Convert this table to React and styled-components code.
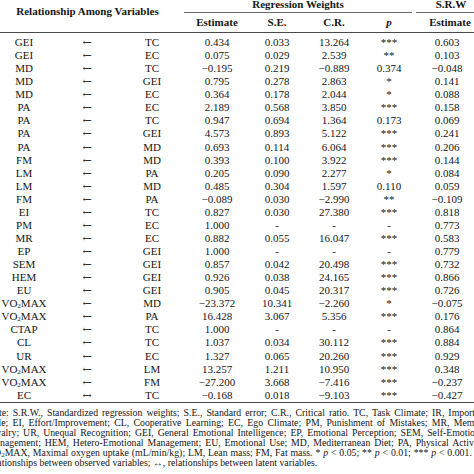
import React from "react";
import styled, { createGlobalStyle } from "styled-components";

const Global = createGlobalStyle`
  html, body { margin: 0; padding: 0; background: #ffffff; }
  body { width: 474px; height: 474px; overflow: hidden; }
`;

const Page = styled.div`
  width: 474px;
  height: 474px;
  overflow: hidden;
  background: #ffffff;
  color: #161616;
  font-family: "Liberation Serif", "Times New Roman", serif;
`;

const Sheet = styled.div`
  margin-left: -6px;
  margin-top: -4px;
  width: 486px;
`;

const COLS = "60px 66px 64px 66px 54px 60px 50px 66px";

const Head = styled.div`
  display: grid;
  grid-template-columns: ${COLS};
  grid-template-rows: 17px 19px;
  border-bottom: 1px solid #4a4a4a;
  font-weight: 700;
  font-size: 11px;
`;

const HeadCell = styled.div`
  grid-column: ${(p) => p.$col};
  grid-row: ${(p) => p.$row};
  text-align: center;
  line-height: ${(p) => (p.$row === "1" ? "16px" : "19px")};
  padding-left: ${(p) => p.$shift || 0}px;
  padding-right: ${(p) => p.$pull || 0}px;
  align-self: ${(p) => p.$align || "stretch"};
  padding-top: ${(p) => p.$top || 0}px;
  border-bottom: ${(p) => (p.$rule ? "1px solid #6a6a6a" : "none")};
  margin: ${(p) => p.$margin || "0"};
  box-sizing: border-box;
  white-space: nowrap;
`;

const Body = styled.div`
  padding-top: 3px;
  border-bottom: 1px solid #4a4a4a;
`;

const Row = styled.div`
  display: grid;
  grid-template-columns: ${COLS};
  height: 13.07px;
  line-height: 13.07px;
  font-size: 11px;
`;

const Cell = styled.div`
  text-align: center;
  white-space: nowrap;
`;

const Arrow = styled.span`
  font-family: "DejaVu Serif", serif;
  font-size: 11px;
  color: #333;
`;

const Sub = styled.sub`
  font-size: 7px;
  vertical-align: -1px;
  line-height: 0;
`;

const Notes = styled.div`
  margin-top: 5px;
  margin-left: -13px;
  width: 500px;
  font-size: 9.8px;
  line-height: 10px;
`;

const NoteLine = styled.div`
  white-space: nowrap;
  text-align: ${(p) => (p.$last ? "left" : "justify")};
  text-align-last: ${(p) => (p.$last ? "left" : "justify")};
`;

const I = styled.i`
  font-style: italic;
`;

const rows = [
  ["GEI", "←", "TC", "0.434", "0.033", "13.264", "***", "0.603"],
  ["GEI", "←", "EC", "0.075", "0.029", "2.539", "**", "0.103"],
  ["MD", "←", "TC", "−0.195", "0.219", "−0.889", "0.374", "−0.048"],
  ["MD", "←", "GEI", "0.795", "0.278", "2.863", "*", "0.141"],
  ["MD", "←", "EC", "0.364", "0.178", "2.044", "*", "0.088"],
  ["PA", "←", "EC", "2.189", "0.568", "3.850", "***", "0.158"],
  ["PA", "←", "TC", "0.947", "0.694", "1.364", "0.173", "0.069"],
  ["PA", "←", "GEI", "4.573", "0.893", "5.122", "***", "0.241"],
  ["PA", "←", "MD", "0.693", "0.114", "6.064", "***", "0.206"],
  ["FM", "←", "MD", "0.393", "0.100", "3.922", "***", "0.144"],
  ["LM", "←", "PA", "0.205", "0.090", "2.277", "*", "0.084"],
  ["LM", "←", "MD", "0.485", "0.304", "1.597", "0.110", "0.059"],
  ["FM", "←", "PA", "−0.089", "0.030", "−2.990", "**", "−0.109"],
  ["EI", "←", "TC", "0.827", "0.030", "27.380", "***", "0.818"],
  ["PM", "←", "EC", "1.000", "-", "-", "-", "0.773"],
  ["MR", "←", "EC", "0.882", "0.055", "16.047", "***", "0.583"],
  ["EP", "←", "GEI", "1.000", "-", "-", "-", "0.779"],
  ["SEM", "←", "GEI", "0.857", "0.042", "20.498", "***", "0.732"],
  ["HEM", "←", "GEI", "0.926", "0.038", "24.165", "***", "0.866"],
  ["EU", "←", "GEI", "0.905", "0.045", "20.317", "***", "0.726"],
  ["VO2MAX", "←", "MD", "−23.372", "10.341", "−2.260", "*", "−0.075"],
  ["VO2MAX", "←", "PA", "16.428", "3.067", "5.356", "***", "0.176"],
  ["CTAP", "←", "TC", "1.000", "-", "-", "-", "0.864"],
  ["CL", "←", "TC", "1.037", "0.034", "30.112", "***", "0.884"],
  ["UR", "←", "EC", "1.327", "0.065", "20.260", "***", "0.929"],
  ["VO2MAX", "←", "LM", "13.257", "1.211", "10.950", "***", "0.348"],
  ["VO2MAX", "←", "FM", "−27.200", "3.668", "−7.416", "***", "−0.237"],
  ["EC", "↔", "TC", "−0.168", "0.018", "−9.103", "***", "−0.427"],
];

function Var({ name }) {
  if (name === "VO2MAX") {
    return (
      <>
        VO<Sub>2</Sub>MAX
      </>
    );
  }
  return name;
}

export default function App() {
  return (
    <Page>
      <Global />
      <Sheet>
        <Head>
          <HeadCell $col="1 / 4" $row="1 / 3" $align="start" $top={6} $pull={3}>
            Relationship Among Variables
          </HeadCell>
          <HeadCell $col="4 / 8" $row="1" $rule $margin="0 2px 0 0">
            Regression Weights
          </HeadCell>
          <HeadCell $col="8" $row="1" $rule $shift={6} $margin="0 0 0 2px">
            S.R.W
          </HeadCell>
          <HeadCell $col="4" $row="2">Estimate</HeadCell>
          <HeadCell $col="5" $row="2">S.E.</HeadCell>
          <HeadCell $col="6" $row="2">C.R.</HeadCell>
          <HeadCell $col="7" $row="2">
            <I>p</I>
          </HeadCell>
          <HeadCell $col="8" $row="2" $shift={6}>Estimate</HeadCell>
        </Head>
        <Body>
          {rows.map((r, i) => (
            <Row key={i}>
              <Cell>
                <Var name={r[0]} />
              </Cell>
              <Cell>
                <Arrow>{r[1]}</Arrow>
              </Cell>
              <Cell>{r[2]}</Cell>
              <Cell>{r[3]}</Cell>
              <Cell>{r[4]}</Cell>
              <Cell>{r[5]}</Cell>
              <Cell>{r[6]}</Cell>
              <Cell>{r[7]}</Cell>
            </Row>
          ))}
        </Body>
      </Sheet>
      <Notes>
        <NoteLine>
          Note: S.R.W., Standardized regression weights; S.E., Standard error; C.R., Critical ratio. TC, Task Climate; IR, Important
        </NoteLine>
        <NoteLine>
          Role; EI, Effort/Improvement; CL, Cooperative Learning; EC, Ego Climate; PM, Punishment of Mistakes; MR, Member
        </NoteLine>
        <NoteLine>
          Rivalry; UR, Unequal Recognition; GEI, General Emotional Intelligence; EP, Emotional Perception; SEM, Self-Emotional
        </NoteLine>
        <NoteLine>
          Management; HEM, Hetero-Emotional Management; EU, Emotional Use; MD, Mediterranean Diet; PA, Physical Activity;
        </NoteLine>
        <NoteLine>
          VO<Sub>2</Sub>MAX, Maximal oxygen uptake (mL/min/kg); LM, Lean mass; FM, Fat mass. * <I>p</I> &lt; 0.05; ** <I>p</I> &lt; 0.01; *** <I>p</I> &lt; 0.001. ←,
        </NoteLine>
        <NoteLine $last>
          relationships between observed variables; ↔, relationships between latent variables.
        </NoteLine>
      </Notes>
    </Page>
  );
}
